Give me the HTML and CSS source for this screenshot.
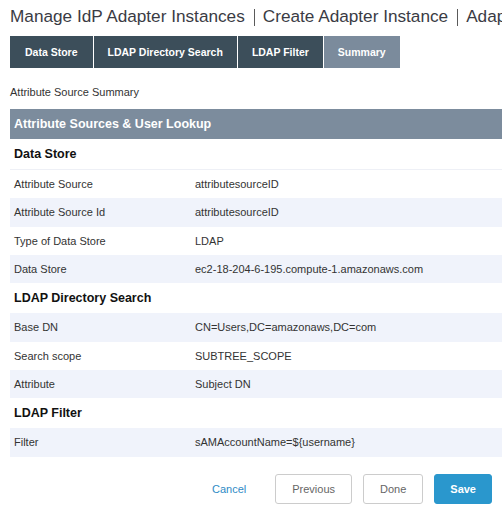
FILE: index.html
```html
<!DOCTYPE html>
<html lang="en">
<head>
<meta charset="utf-8">
<title>Create Adapter Instance - Summary</title>
<link rel="stylesheet" href="styles.css">
</head>
<body>
<div class="page">
  <div class="title-wrap">
    <h1 class="title">Manage IdP Adapter Instances<span class="sep"></span>Create Adapter Instance<span class="sep"></span>Adap</h1>
  </div>

  <nav class="tabs">
    <a class="tab">Data Store</a>
    <a class="tab">LDAP Directory Search</a>
    <a class="tab">LDAP Filter</a>
    <a class="tab active">Summary</a>
  </nav>

  <p class="subtitle">Attribute Source Summary</p>

  <section class="summary">
    <div class="summary-header">Attribute Sources &amp; User Lookup</div>
    <div class="summary-body">
      <h3 class="group-title first">Data Store</h3>
      <div class="row"><span class="label">Attribute Source</span><span class="value">attributesourceID</span></div>
      <div class="row"><span class="label">Attribute Source Id</span><span class="value">attributesourceID</span></div>
      <div class="row"><span class="label">Type of Data Store</span><span class="value">LDAP</span></div>
      <div class="row"><span class="label">Data Store</span><span class="value">ec2-18-204-6-195.compute-1.amazonaws.com</span></div>
      <h3 class="group-title">LDAP Directory Search</h3>
      <div class="row"><span class="label">Base DN</span><span class="value">CN=Users,DC=amazonaws,DC=com</span></div>
      <div class="row"><span class="label">Search scope</span><span class="value">SUBTREE_SCOPE</span></div>
      <div class="row"><span class="label">Attribute</span><span class="value">Subject DN</span></div>
      <h3 class="group-title">LDAP Filter</h3>
      <div class="row"><span class="label">Filter</span><span class="value">sAMAccountName=${username}</span></div>
    </div>
  </section>

  <div class="actions">
    <button class="btn btn-link">Cancel</button>
    <button class="btn btn-secondary">Previous</button>
    <button class="btn btn-secondary">Done</button>
    <button class="btn btn-primary">Save</button>
  </div>
</div>
</body>
</html>
```

FILE: styles.css
```css
html, body {
  margin: 0;
  padding: 0;
  overflow: hidden;
  background: #ffffff;
}

body {
  font-family: "Liberation Sans", Arial, sans-serif;
  color: #333333;
}

.page {
  padding-left: 10px;
  padding-top: 6px;
}

.title-wrap {
  overflow: hidden;
}

.title {
  margin: 0;
  font-size: 17.2px;
  line-height: 20px;
  font-weight: normal;
  color: #3a3b44;
  white-space: nowrap;
}

.sep {
  display: inline-block;
  width: 1px;
  height: 17px;
  background: #5a5a5a;
  margin: 0 8px 0 9px;
  vertical-align: -4px;
}

.tabs {
  display: flex;
  gap: 1px;
  margin-top: 10px;
}

.tab {
  display: block;
  height: 32px;
  line-height: 32px;
  padding: 0 14px;
  background: #3c4e5a;
  color: #ffffff;
  font-size: 10.5px;
  font-weight: bold;
  white-space: nowrap;
}

.tab:first-child {
  padding: 0 15px;
}

.tab.active {
  background: #7b8b9c;
}

.subtitle {
  margin: 18px 0 10px;
  font-size: 11px;
  line-height: 13px;
  color: #333333;
}

.summary-header {
  height: 30px;
  line-height: 30px;
  padding-left: 4px;
  background: #7c8c9d;
  color: #ffffff;
  font-size: 12.5px;
  font-weight: bold;
  white-space: nowrap;
}

.group-title {
  margin: 0;
  padding: 1px 0 0 4px;
  line-height: 29px;
  font-size: 12.5px;
  font-weight: bold;
  color: #111111;
}

.group-title.first {
  border-bottom: 1px solid #eef0f6;
}

.row {
  display: grid;
  grid-template-columns: 181px 1fr;
  padding-left: 4px;
  height: 28.33px;
  line-height: 28.33px;
  font-size: 11px;
  color: #333333;
  white-space: nowrap;
}

.row:nth-child(odd) {
  background: #f0f3fb;
}

.actions {
  display: flex;
  justify-content: flex-end;
  align-items: center;
  gap: 11px;
  margin-top: 17px;
  padding-right: 10px;
}

.btn {
  height: 30px;
  padding: 0 16px;
  font-family: "Liberation Sans", Arial, sans-serif;
  font-size: 11px;
  border-radius: 3px;
  cursor: pointer;
  background: #ffffff;
}

.btn-link {
  border: 1px solid transparent;
  color: #2f8bc6;
  background: transparent;
  margin-right: 1px;
}

.btn-secondary {
  border: 1px solid #cccccc;
  color: #666666;
}

.btn-primary {
  border: 1px solid #2a97cd;
  background: #2a97cd;
  color: #ffffff;
  font-weight: bold;
  padding: 0 15px;
}
```
